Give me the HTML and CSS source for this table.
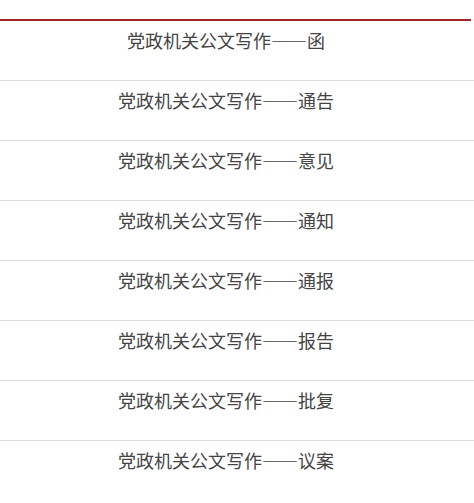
FILE: index.html
```html
<!DOCTYPE html>
<html lang="zh-CN">
<head>
<meta charset="utf-8">
<link rel="stylesheet" href="styles.css">
</head>
<body>
<div class="topbar"></div>
<ul class="list">
  <li class="item">党政机关公文写作——函</li>
  <li class="item">党政机关公文写作——通告</li>
  <li class="item">党政机关公文写作——意见</li>
  <li class="item">党政机关公文写作——通知</li>
  <li class="item">党政机关公文写作——通报</li>
  <li class="item">党政机关公文写作——报告</li>
  <li class="item">党政机关公文写作——批复</li>
  <li class="item">党政机关公文写作——议案</li>
</ul>
</body>
</html>
```

FILE: styles.css
```css
html, body {
  margin: 0;
  padding: 0;
  background: #ffffff;
}
body {
  font-family: "Noto Sans CJK SC", "Noto Sans", sans-serif;
  color: #444444;
  overflow: hidden;
}
.topbar {
  height: 19px;
  width: 471px;
  border-bottom: 2px solid #a3262b;
}
.list {
  list-style: none;
  margin: 0;
  padding: 0;
}
.item {
  box-sizing: content-box;
  border-bottom: 1px solid #dcdcdc;
  padding: 6px 22px 0 0;
  height: 53px;
  text-align: center;
  font-size: 18px;
  line-height: 26px;
}
.item:last-child {
  border-bottom: none;
}
```
